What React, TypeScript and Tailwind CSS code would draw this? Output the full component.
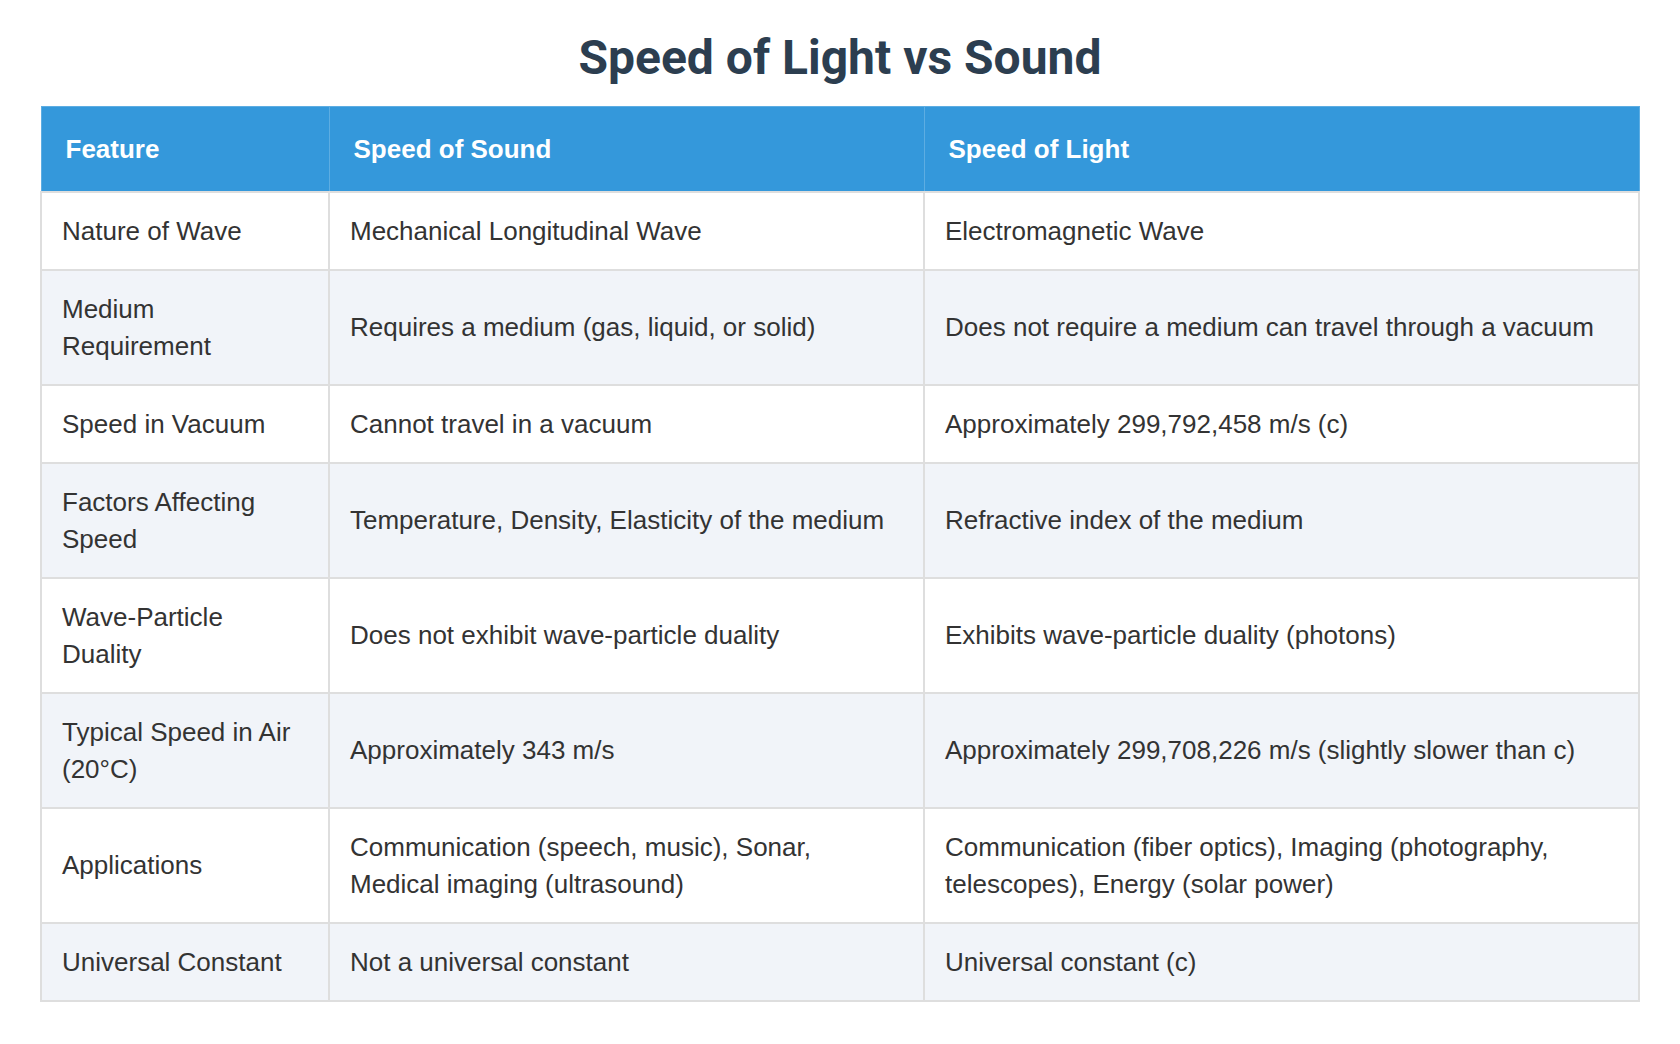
const rows: [string, string, string][] = [
  ["Nature of Wave", "Mechanical Longitudinal Wave", "Electromagnetic Wave"],
  ["Medium Requirement", "Requires a medium (gas, liquid, or solid)", "Does not require a medium can travel through a vacuum"],
  ["Speed in Vacuum", "Cannot travel in a vacuum", "Approximately 299,792,458 m/s (c)"],
  ["Factors Affecting Speed", "Temperature, Density, Elasticity of the medium", "Refractive index of the medium"],
  ["Wave-Particle Duality", "Does not exhibit wave-particle duality", "Exhibits wave-particle duality (photons)"],
  ["Typical Speed in Air (20°C)", "Approximately 343 m/s", "Approximately 299,708,226 m/s (slightly slower than c)"],
  ["Applications", "Communication (speech, music), Sonar, Medical imaging (ultrasound)", "Communication (fiber optics), Imaging (photography, telescopes), Energy (solar power)"],
  ["Universal Constant", "Not a universal constant", "Universal constant (c)"],
];

export default function App() {
  return (
    <div className="min-h-screen bg-white px-10 pt-[30px] font-[family-name:'Liberation_Sans',Arial,sans-serif]">
      <h1 className="mb-[20px] text-center font-[family-name:Roboto,sans-serif] text-[48px] font-bold leading-[56px] text-[#2c3e50]">
        Speed of Light vs Sound
      </h1>
      <table className="w-full table-fixed border-collapse">
        <colgroup>
          <col className="w-[288px]" />
          <col className="w-[595px]" />
          <col />
        </colgroup>
        <thead>
          <tr className="bg-[#3498db]">
            {["Feature", "Speed of Sound", "Speed of Light"].map((h) => (
              <th
                key={h}
                className="border border-[#5dade2] px-6 py-6 text-left text-[26px] font-bold leading-[36px] text-white"
              >
                {h}
              </th>
            ))}
          </tr>
        </thead>
        <tbody>
          {rows.map((r, i) => (
            <tr key={r[0]} className={i % 2 === 1 ? "bg-[#f1f4f9]" : "bg-white"}>
              {r.map((c, j) => (
                <td
                  key={j}
                  className="border-2 border-[#dedede] px-[20px] py-[19.5px] align-middle text-[26px] leading-[37px] text-[#333333]"
                >
                  {c}
                </td>
              ))}
            </tr>
          ))}
        </tbody>
      </table>
    </div>
  );
}
